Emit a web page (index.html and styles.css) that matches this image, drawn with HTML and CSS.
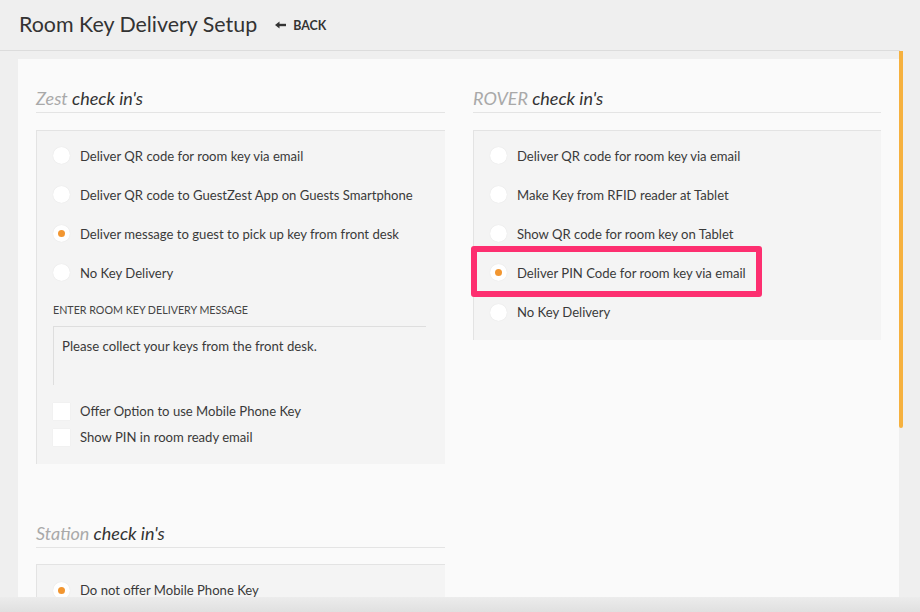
FILE: index.html
```html
<!DOCTYPE html>
<html>
<head>
<meta charset="utf-8">
<link rel="stylesheet" href="styles.css">
</head>
<body>
<div class="page">
  <header class="topbar">
    <h1 class="title">Room Key Delivery Setup</h1>
    <a class="back" href="#"><svg class="back-arrow" width="11" height="8" viewBox="0 0 11 8"><polygon points="0,4 4.5,0.5 4.5,7.5" fill="#333"/><rect x="4" y="2.8" width="7" height="2.4" fill="#333"/></svg>BACK</a>
  </header>
  <div class="body">
    <main class="panel">
      <div class="grid">
        <section class="col">
          <h2 class="sec-title"><span class="brand">Zest</span> check in's</h2>
          <div class="box box-zest">
            <div class="opt"><span class="radio"></span>Deliver QR code for room key via email</div>
            <div class="opt"><span class="radio"></span>Deliver QR code to GuestZest App on Guests Smartphone</div>
            <div class="opt"><span class="radio on"></span>Deliver message to guest to pick up key from front desk</div>
            <div class="opt"><span class="radio"></span>No Key Delivery</div>
            <div class="field-label">ENTER ROOM KEY DELIVERY MESSAGE</div>
            <div class="textarea">Please collect your keys from the front desk.</div>
            <div class="checks">
              <div class="chk"><span class="checkbox"></span>Offer Option to use Mobile Phone Key</div>
              <div class="chk"><span class="checkbox"></span>Show PIN in room ready email</div>
            </div>
          </div>
        </section>
        <section class="col">
          <h2 class="sec-title"><span class="brand">ROVER</span> check in's</h2>
          <div class="box box-rover">
            <div class="opt"><span class="radio"></span>Deliver QR code for room key via email</div>
            <div class="opt"><span class="radio"></span>Make Key from RFID reader at Tablet</div>
            <div class="opt"><span class="radio"></span>Show QR code for room key on Tablet</div>
            <div class="opt"><span class="radio on"></span>Deliver PIN Code for room key via email<span class="highlight"></span></div>
            <div class="opt"><span class="radio"></span>No Key Delivery</div>
          </div>
        </section>
        <section class="col">
          <h2 class="sec-title"><span class="brand">Station</span> check in's</h2>
          <div class="box box-station">
            <div class="opt"><span class="radio on"></span>Do not offer Mobile Phone Key</div>
          </div>
        </section>
      </div>
    </main>
    <div class="scrollbar"></div>
  </div>
  <div class="bottom-shade"></div>
</div>
</body>
</html>
```

FILE: styles.css
```css
* { box-sizing: border-box; }
html, body { margin: 0; padding: 0; }
body {
  width: 920px;
  height: 612px;
  overflow: hidden;
  background: #efefef;
  font-family: "Lato", "Open Sans", sans-serif;
  color: #3a3a3a;
}
.page {
  position: relative;
  width: 920px;
  height: 612px;
  overflow: hidden;
  background: #efefef;
}
.topbar {
  height: 51px;
  border-bottom: 1px solid #dcdcdc;
  display: flex;
  align-items: center;
  padding: 0 0 2px 19px;
  width: 900px;
}
.title {
  margin: 0;
  font-size: 21.4px;
  font-weight: 400;
  color: #333;
}
.back {
  display: flex;
  align-items: center;
  margin-left: 18px;
  margin-top: 2px;
  font-size: 12.4px;
  font-weight: 700;
  color: #333;
  text-decoration: none;
}
.back-arrow { margin-right: 7px; }
.body {
  display: flex;
  align-items: flex-start;
}
.panel {
  margin-left: 18px;
  margin-top: 8px;
  width: 881px;
  height: 540px;
  overflow: hidden;
  background: #fafafa;
  padding: 27px 18px 0 18px;
}
.scrollbar {
  width: 4px;
  height: 377px;
  background: #f6b13e;
  border-radius: 0 0 2px 2px;
}
.grid {
  display: grid;
  grid-template-columns: 409px 408px;
  column-gap: 28px;
  row-gap: 57px;
  align-items: start;
}
.sec-title {
  margin: 0;
  height: 27px;
  line-height: 24px;
  padding-bottom: 2px;
  border-bottom: 1px solid #e4e4e4;
  font-size: 18px;
  font-weight: 400;
  font-style: italic;
  color: #333;
}
.brand { color: #a9a9a9; }
.box {
  margin-top: 17px;
  background: #f4f4f4;
  border-top: 1px solid #e3e3e3;
  border-left: 1px solid #e3e3e3;
  padding: 5px 0 8px 16px;
}
.box-zest { padding-bottom: 14px; }
.box-station { margin-top: 16px; padding-bottom: 0; }
.opt {
  position: relative;
  display: flex;
  align-items: center;
  height: 39px;
  font-size: 13.1px;
  color: #3a3a3a;
}
.opt:last-child { height: 40px; }
.radio {
  position: relative;
  width: 17px;
  height: 17px;
  border-radius: 50%;
  background: #fff;
  box-shadow: 0 0 1px rgba(0,0,0,0.12);
  margin-right: 10px;
  flex: none;
}
.radio.on::after {
  content: "";
  position: absolute;
  left: 5px;
  top: 5px;
  width: 7px;
  height: 7px;
  border-radius: 50%;
  background: #f29630;
}
.highlight {
  position: absolute;
  left: -19px;
  top: -7px;
  width: 291px;
  height: 51px;
  border: 6px solid #fd2f70;
  border-radius: 3px;
}
.field-label {
  margin-top: 11px;
  font-size: 10.7px;
  color: #444;
  line-height: 14px;
}
.textarea {
  margin-top: 9px;
  width: 373px;
  height: 59px;
  border-top: 1px solid #dedede;
  border-left: 1px solid #dedede;
  padding: 10px 8px;
  font-size: 13.2px;
  line-height: 18px;
  color: #3a3a3a;
}
.checks { margin-top: 13px; }
.chk {
  display: flex;
  align-items: center;
  height: 26px;
  font-size: 13.1px;
  color: #3a3a3a;
}
.checkbox {
  width: 17px;
  height: 17px;
  background: #fff;
  box-shadow: 0 0 1px rgba(0,0,0,0.08);
  margin-right: 10px;
  flex: none;
}
.bottom-shade {
  position: absolute;
  left: 0;
  right: 0;
  bottom: 0;
  height: 15px;
  background: linear-gradient(#ececec, #e0e0e0);
}
```
